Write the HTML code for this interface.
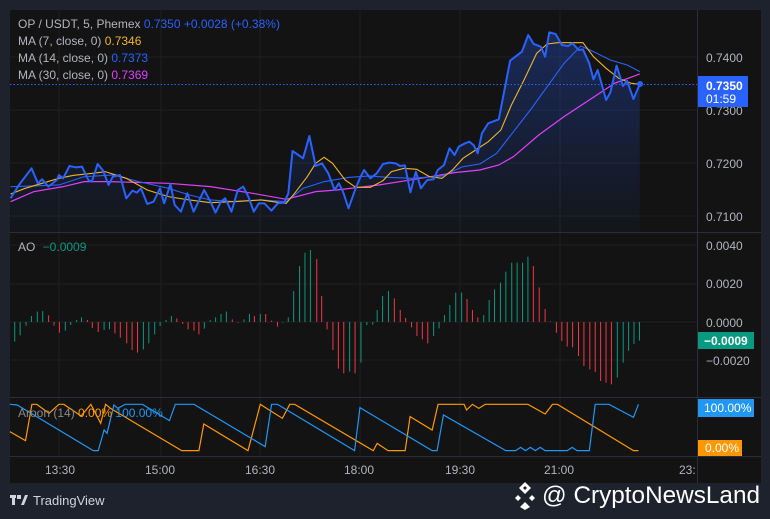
<!DOCTYPE html>
<html><head><meta charset="utf-8"><style>
body{margin:0;width:770px;height:519px;background:#1e222d;overflow:hidden;font-family:"Liberation Sans",sans-serif}
svg{position:absolute;left:0;top:0}
</style></head><body>
<svg width="770" height="519" viewBox="0 0 770 519">
<defs><linearGradient id="g" x1="0" y1="0" x2="0" y2="1"><stop offset="0" stop-color="#2962ff" stop-opacity="0.3"/><stop offset="1" stop-color="#2962ff" stop-opacity="0.03"/></linearGradient></defs>
<rect x="10" y="10" width="751" height="473" fill="#131313"/>
<g stroke="#1f1f1f" stroke-width="1">
<line x1="10" y1="57" x2="697" y2="57"/><line x1="10" y1="110" x2="697" y2="110"/><line x1="10" y1="163" x2="697" y2="163"/><line x1="10" y1="216" x2="697" y2="216"/>
<line x1="10" y1="245" x2="697" y2="245"/><line x1="10" y1="284" x2="697" y2="284"/><line x1="10" y1="322" x2="697" y2="322"/><line x1="10" y1="360" x2="697" y2="360"/>
<line x1="59" y1="10" x2="59" y2="456"/><line x1="161" y1="10" x2="161" y2="456"/><line x1="260" y1="10" x2="260" y2="456"/><line x1="360" y1="10" x2="360" y2="456"/><line x1="460" y1="10" x2="460" y2="456"/><line x1="560" y1="10" x2="560" y2="456"/>
</g>
<g stroke="#2a2e39" stroke-width="1">
<line x1="10" y1="232.5" x2="761" y2="232.5"/><line x1="10" y1="397.5" x2="761" y2="397.5"/><line x1="10" y1="456.5" x2="761" y2="456.5"/><line x1="697.5" y1="10" x2="697.5" y2="483"/>
</g>
<g transform="translate(0,20) scale(0.4209,0.3333)" fill="none">
<path fill="url(#g)" d="M25,535 L45,495 L75,445 L90,490 L100,478 L115,500 L135,480 L140,465 L150,475 L165,438 L180,442 L195,440 L210,480 L218,485 L232,432 L245,452 L258,495 L268,470 L285,465 L300,535 L315,512 L325,518 L335,505 L350,552 L365,545 L380,505 L390,550 L405,492 L415,555 L430,575 L445,520 L460,575 L485,510 L500,545 L512,578 L525,545 L535,535 L550,575 L565,510 L578,500 L590,530 L603,575 L615,550 L628,550 L645,572 L660,550 L675,548 L685,520 L695,393 L720,415 L735,348 L750,438 L765,430 L780,460 L795,510 L805,490 L815,515 L828,565 L845,505 L855,475 L865,450 L880,475 L895,460 L910,432 L925,428 L940,430 L950,438 L962,436 L975,517 L988,455 L1000,505 L1015,480 L1030,478 L1040,450 L1055,435 L1068,385 L1080,405 L1090,380 L1105,370 L1115,365 L1125,375 L1135,400 L1145,340 L1160,310 L1185,298 L1212,122 L1240,95 L1255,45 L1268,72 L1285,80 L1295,110 L1305,37 L1320,42 L1335,75 L1350,78 L1360,70 L1375,90 L1385,88 L1400,130 L1410,178 L1420,150 L1440,240 L1450,218 L1465,137 L1480,198 L1490,183 L1505,237 L1520,193 L1520,636 L25,636Z"/>
<path vector-effect="non-scaling-stroke" stroke="#e040fb" stroke-width="1.2" d="M25,545 L80,515 L150,500 L200,485 L260,485 L400,490 L500,500 L600,520 L680,538 L750,515 L800,510 L900,495 L1000,475 L1080,458 L1140,450 L1185,435 L1220,410 L1280,345 L1340,290 L1400,240 L1460,190 L1520,162"/>
<path vector-effect="non-scaling-stroke" stroke="#2962ff" stroke-width="1.1" d="M25,500 L80,498 L140,495 L200,470 L270,465 L330,485 L400,505 L450,525 L500,540 L560,545 L620,540 L680,545 L720,505 L770,485 L830,472 L880,468 L920,472 L980,475 L1050,468 L1100,440 L1140,432 L1180,400 L1220,335 L1260,270 L1300,200 L1340,130 L1380,78 L1410,95 L1450,120 L1490,135 L1520,155"/>
<path vector-effect="non-scaling-stroke" stroke="#f0b429" stroke-width="1.1" d="M25,522 L60,505 L100,490 L140,475 L175,466 L220,460 L250,455 L300,475 L350,510 L400,530 L450,540 L500,548 L550,545 L620,540 L665,548 L680,550 L700,520 L730,470 L750,430 L770,412 L790,430 L820,480 L845,502 L880,502 L910,482 L930,455 L960,445 L990,448 L1020,470 L1050,475 L1075,450 L1100,415 L1130,390 L1160,365 L1190,330 L1215,255 L1245,180 L1275,100 L1300,72 L1325,68 L1385,68 L1410,110 L1440,145 L1470,175 L1500,190 L1520,193"/>
<path vector-effect="non-scaling-stroke" stroke="#2962ff" stroke-width="2" stroke-linejoin="round" d="M25,535 L45,495 L75,445 L90,490 L100,478 L115,500 L135,480 L140,465 L150,475 L165,438 L180,442 L195,440 L210,480 L218,485 L232,432 L245,452 L258,495 L268,470 L285,465 L300,535 L315,512 L325,518 L335,505 L350,552 L365,545 L380,505 L390,550 L405,492 L415,555 L430,575 L445,520 L460,575 L485,510 L500,545 L512,578 L525,545 L535,535 L550,575 L565,510 L578,500 L590,530 L603,575 L615,550 L628,550 L645,572 L660,550 L675,548 L685,520 L695,393 L720,415 L735,348 L750,438 L765,430 L780,460 L795,510 L805,490 L815,515 L828,565 L845,505 L855,475 L865,450 L880,475 L895,460 L910,432 L925,428 L940,430 L950,438 L962,436 L975,517 L988,455 L1000,505 L1015,480 L1030,478 L1040,450 L1055,435 L1068,385 L1080,405 L1090,380 L1105,370 L1115,365 L1125,375 L1135,400 L1145,340 L1160,310 L1185,298 L1212,122 L1240,95 L1255,45 L1268,72 L1285,80 L1295,110 L1305,37 L1320,42 L1335,75 L1350,78 L1360,70 L1375,90 L1385,88 L1400,130 L1410,178 L1420,150 L1440,240 L1450,218 L1465,137 L1480,198 L1490,183 L1505,237 L1520,193"/>
</g>
<circle cx="640" cy="84" r="3" fill="#2962ff"/>
<line x1="10" y1="84.5" x2="697" y2="84.5" stroke="#2962ff" stroke-dasharray="1.5,2"/>
<g transform="translate(0,230) scale(0.4911,0.3333)" stroke-width="1" fill="none">
<path vector-effect="non-scaling-stroke" stroke="#089981" d="M30,276V335M41,276V316M53,276V287M64,276V258M76,276V245M87,276V243M133,276V302M144,276V285M156,276V270M166,276V262M212,276V300M223,276V298M292,276V358M303,276V340M315,276V313M326,276V288M338,276V270M349,276V258M416,276V296M428,276V270M439,276V262M450,276V252M461,276V245M497,276V268M508,276V252M530,276V252M576,276V278M587,276V262M598,276V183M610,276V108M621,276V68M632,276V60M712,276V425M735,276V398M747,276V285M759,276V284M768,276V240M779,276V198M791,276V183M883,276V318M894,276V295M905,276V255M916,276V225M928,276V188M940,276V188M985,276V255M996,276V210M1007,276V178M1019,276V158M1030,276V125M1042,276V98M1053,276V98M1064,276V98M1075,276V80M1257,276V443M1269,276V398M1280,276V362M1291,276V342M1302,276V332"/>
<path vector-effect="non-scaling-stroke" stroke="#f23645" d="M99,276V256M110,276V287M121,276V308M178,276V270M188,276V294M200,276V306M234,276V310M245,276V323M258,276V340M269,276V360M280,276V368M360,276V265M372,276V282M383,276V298M395,276V302M405,276V313M473,276V268M485,276V278M518,276V258M541,276V252M553,276V272M565,276V290M645,276V87M655,276V198M666,276V298M678,276V360M689,276V416M700,276V430M723,276V430M803,276V205M815,276V240M826,276V264M838,276V292M849,276V318M860,276V328M871,276V340M951,276V207M962,276V240M973,276V262M1086,276V108M1098,276V172M1110,276V237M1121,276V275M1133,276V308M1144,276V333M1155,276V350M1166,276V352M1178,276V378M1189,276V408M1201,276V418M1212,276V426M1223,276V453M1234,276V458M1245,276V463"/>
</g>
<g transform="translate(0,390) scale(0.4911,0.3333)" fill="none">
<path vector-effect="non-scaling-stroke" stroke="#ff9800" stroke-width="1.2" d="M20,125 L52,152 L65,43 L75,43 L100,70 L120,43 L130,43 L165,78 L185,43 L205,100 L215,43 L225,55 L370,182 L405,182 L415,102 L505,182 L530,43 L575,85 L590,43 L600,43 L760,182 L768,160 L790,182 L825,182 L835,80 L880,120 L892,43 L945,43 L950,60 L962,43 L975,55 L988,43 L1075,43 L1110,72 L1125,43 L1135,43 L1290,182 L1300,182"/>
<path vector-effect="non-scaling-stroke" stroke="#2196f3" stroke-width="1.2" d="M20,43 L35,45 L190,182 L200,182 L212,120 L218,130 L232,45 L240,55 L255,43 L290,43 L345,92 L357,43 L395,43 L540,170 L553,43 L565,43 L722,182 L733,53 L880,182 L890,182 L903,75 L1030,182 L1050,182 L1060,172 L1070,182 L1080,172 L1090,182 L1100,172 L1110,182 L1155,182 L1165,172 L1175,182 L1200,182 L1212,43 L1240,43 L1290,82 L1300,43"/>
</g>
<g font-size="12" fill="#b2b5be">
<text x="18" y="28">OP / USDT, 5, Phemex <tspan fill="#2962ff">0.7350 </tspan><tspan fill="#2962ff">+0.0028 (+0.38%)</tspan></text>
<text x="18" y="45">MA (7, close, 0) <tspan fill="#f0b429">0.7346</tspan></text>
<text x="18" y="62">MA (14, close, 0) <tspan fill="#2962ff">0.7373</tspan></text>
<text x="18" y="79">MA (30, close, 0) <tspan fill="#e040fb">0.7369</tspan></text>
<text x="18" y="251">AO <tspan fill="#089981" dx="4">−0.0009</tspan></text>
<text x="18" y="417" fill="#888">Aroon (14) <tspan fill="#ff9800">0.00%</tspan> <tspan fill="#2196f3">100.00%</tspan></text>
</g>
<g font-size="12" fill="#b2b5be">
<text x="706" y="62">0.7400</text><text x="706" y="115">0.7300</text><text x="706" y="168">0.7200</text><text x="706" y="221">0.7100</text>
<text x="706" y="250">0.0040</text><text x="706" y="288">0.0020</text><text x="706" y="327">0.0000</text><text x="706" y="365">−0.0020</text>
<text x="45" y="474">13:30</text><text x="145" y="474">15:00</text><text x="245" y="474">16:30</text><text x="344" y="474">18:00</text><text x="445" y="474">19:30</text><text x="544" y="474">21:00</text><text x="679" y="474">23:</text>
</g>
<rect x="698" y="76" width="50" height="31" fill="#2962ff"/>
<text x="706" y="90" font-size="12" font-weight="bold" fill="#fff">0.7350</text>
<text x="706" y="103" font-size="12" fill="#fff">01:59</text>
<rect x="698" y="332" width="56" height="17" fill="#089981"/>
<text x="704" y="345" font-size="12" font-weight="bold" fill="#fff">−0.0009</text>
<rect x="698" y="399" width="56" height="18" fill="#2196f3"/>
<text x="704" y="412" font-size="12" fill="#fff">100.00%</text>
<rect x="698" y="440" width="44" height="16" fill="#ff9800"/>
<text x="705" y="452" font-size="12" fill="#fff">0.00%</text>
<g fill="#d1d4dc"><rect x="10" y="495" width="6" height="3"/><rect x="12" y="495" width="3" height="10"/><rect x="17" y="495" width="4" height="4"/><path d="M21,505 L25,495 L28,495 L24,505Z"/></g>
<text x="33" y="505" font-size="13" fill="#d1d4dc">TradingView</text>
<g fill="#fff"><path d="M525,482 L531,488 L525,494 L519,488Z M525,486 L527,488 L525,490 L523,488Z" fill-rule="evenodd"/><path d="M518,495 L521,498 L518,501 L515,498Z M532,495 L535,498 L532,501 L529,498Z M525,502 L530,507 L525,510 L520,507Z"/></g>
<text x="542" y="503" font-size="24" fill="#fff" textLength="218" lengthAdjust="spacingAndGlyphs">@ CryptoNewsLand</text>
</svg>
</body></html>
